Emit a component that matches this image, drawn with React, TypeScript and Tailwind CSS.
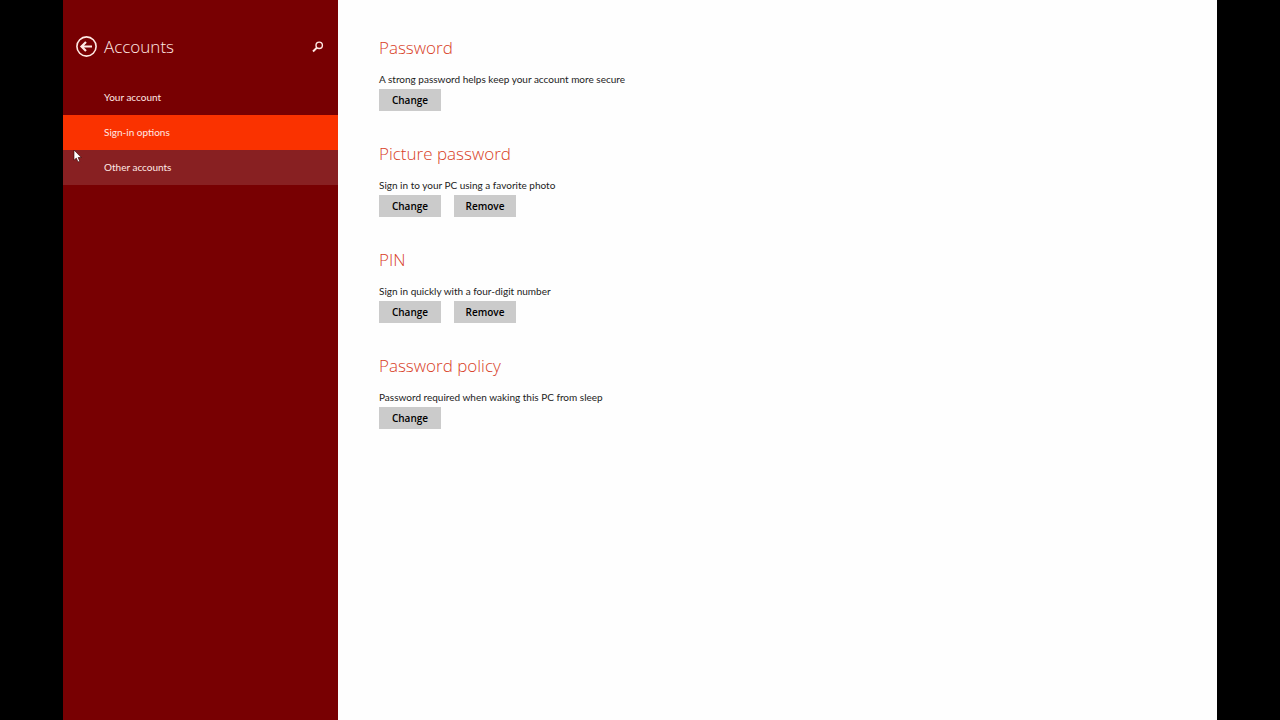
const navItems = [
  { label: "Your account", style: "" },
  { label: "Sign-in options", style: "bg-[#fa3200]" },
  { label: "Other accounts", style: "bg-[#882022]" },
];

const sections = [
  {
    title: "Password",
    text: "A strong password helps keep your account more secure",
    actions: ["Change"],
  },
  {
    title: "Picture password",
    text: "Sign in to your PC using a favorite photo",
    actions: ["Change", "Remove"],
  },
  {
    title: "PIN",
    text: "Sign in quickly with a four-digit number",
    actions: ["Change", "Remove"],
  },
  {
    title: "Password policy",
    text: "Password required when waking this PC from sleep",
    actions: ["Change"],
  },
];

function Sidebar() {
  return (
    <aside className="relative w-[275px] shrink-0 bg-[#780002] text-[#ffe9e4]">
      <div className="flex items-center pt-8 pl-3 pr-[13px]">
        <button aria-label="Back" className="mr-1.5">
          <svg width="23" height="30" viewBox="0 0 23 30" fill="none" stroke="currentColor">
            <circle cx="11.5" cy="14.5" r="9.6" strokeWidth="1.6" />
            <path d="M6.5 14.5H17M11 10L6.5 14.5L11 19" strokeWidth="2.2" />
          </svg>
        </button>
        <h1 className="grow text-[17px] leading-[30px] font-light">Accounts</h1>
        <button aria-label="Search">
          <svg width="14" height="14" viewBox="0 0 14 14" fill="none" stroke="currentColor">
            <circle cx="8.2" cy="5.3" r="3.2" strokeWidth="1.4" />
            <path d="M5.8 7.8L2 11.5" strokeWidth="1.9" />
          </svg>
        </button>
      </div>
      <nav className="mt-[18px] flex flex-col">
        {navItems.map((item) => (
          <a
            key={item.label}
            href="#"
            className={`h-[35px] pl-[41px] font-['Lato','Open_Sans',sans-serif] text-[10px] leading-[35px] ${item.style}`}
          >
            {item.label}
          </a>
        ))}
      </nav>
      {/* mouse pointer */}
      <svg
        className="absolute top-[149px] left-[10px]"
        width="10"
        height="15"
        viewBox="0 0 10 15"
        fill="#fff"
        stroke="#300"
        strokeWidth="0.6"
      >
        <path d="M1 1V11.2L3.3 9.1L5 13L6.8 12.2L5.1 8.5H8.3Z" />
      </svg>
    </aside>
  );
}

function App() {
  return (
    <div className="flex min-h-screen bg-black px-[63px] font-['Open_Sans','Noto_Sans',sans-serif]">
      <Sidebar />
      <main className="flex grow flex-col gap-[29px] bg-[#fefefe] pt-[34px] pl-[41px]">
        {sections.map((section) => (
          <section key={section.title}>
            <h2 className="text-[17px] leading-7 font-light text-[#d8401f]">{section.title}</h2>
            <p className="mt-[7px] font-['Lato','Open_Sans',sans-serif] text-[10px] leading-5 text-[#222]">
              {section.text}
            </p>
            <div className="flex gap-[13px]">
              {section.actions.map((action) => (
                <button
                  key={action}
                  className="h-[22px] w-[62px] bg-[#cbcbcb] text-[10px] font-semibold text-black"
                >
                  {action}
                </button>
              ))}
            </div>
          </section>
        ))}
      </main>
    </div>
  );
}

export default App;
